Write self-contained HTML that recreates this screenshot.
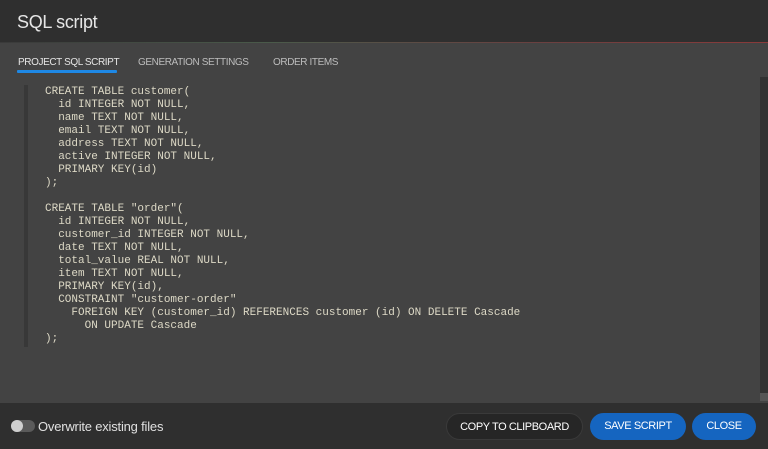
<!DOCTYPE html>
<html><head><style>
*{margin:0;padding:0;box-sizing:border-box}
body{width:768px;height:449px;background:#434343;font-family:"Liberation Sans",sans-serif;position:relative;overflow:hidden}
.hdr{position:absolute;left:0;top:0;width:768px;height:43px;background:#2f2f2f;border-bottom:1px solid #333}
.hdr h1{position:absolute;left:17px;top:12px;font-size:18px;letter-spacing:-0.3px;font-weight:normal;color:#e6e6e6}
.grad{position:absolute;left:0;top:42px;width:768px;height:1px;background:linear-gradient(90deg,#3a3a3a 0%,#4a5a4a 35%,#6a4040 70%,#8a3a3a 100%)}
.tab{position:absolute;top:57px;font-size:10px;letter-spacing:-0.4px;color:#bdbdbd}
.ul{position:absolute;left:17px;top:70px;width:100px;height:3px;background:#1e88e5;border-radius:1px}
.code{position:absolute;left:24px;top:85px;width:736px;height:262px;border-left:4px solid #383838}
pre{position:absolute;left:45px;top:86px;font-family:"Liberation Mono",monospace;font-size:11px;line-height:13px;color:#ddd9c6;margin:0}
.sb{position:absolute;left:760px;top:77px;width:8px;height:316px;background:#323232}
.sbt{position:absolute;left:760px;top:393px;width:8px;height:8px;background:#555}
.ftr{position:absolute;left:0;top:403px;width:768px;height:46px;background:#2f2f2f}
.tg{position:absolute;left:11px;top:420px;width:24px;height:12px;border-radius:6px;background:#5a5a5a}
.tg::after{content:"";position:absolute;left:0;top:0;width:12px;height:12px;border-radius:6px;background:#cfcfcf}
.lbl{position:absolute;left:38px;top:419px;font-size:13px;letter-spacing:-0.2px;color:#e0e0e0}
.btn{position:absolute;top:413px;height:27px;border-radius:14px;font-size:11px;letter-spacing:-0.4px;color:#fff;text-align:center;line-height:27px}
</style></head><body>
<div class="hdr"><h1>SQL script</h1></div>
<div class="grad"></div>
<div class="tab" style="left:18px;color:#e6e6e6">PROJECT SQL SCRIPT</div>
<div class="tab" style="left:138px">GENERATION SETTINGS</div>
<div class="tab" style="left:273px">ORDER ITEMS</div>
<div class="ul"></div>
<div class="code"></div>
<pre>CREATE TABLE customer(
  id INTEGER NOT NULL,
  name TEXT NOT NULL,
  email TEXT NOT NULL,
  address TEXT NOT NULL,
  active INTEGER NOT NULL,
  PRIMARY KEY(id)
);

CREATE TABLE "order"(
  id INTEGER NOT NULL,
  customer_id INTEGER NOT NULL,
  date TEXT NOT NULL,
  total_value REAL NOT NULL,
  item TEXT NOT NULL,
  PRIMARY KEY(id),
  CONSTRAINT "customer-order"
    FOREIGN KEY (customer_id) REFERENCES customer (id) ON DELETE Cascade
      ON UPDATE Cascade
);</pre>
<div class="sb"></div><div class="sbt"></div>
<div class="ftr"></div>
<div class="tg"></div>
<div class="lbl">Overwrite existing files</div>
<div class="btn" style="left:446px;width:137px;background:#262626;border:1px solid #3a3a3a">COPY TO CLIPBOARD</div>
<div class="btn" style="left:590px;width:96px;background:#1565c0">SAVE SCRIPT</div>
<div class="btn" style="left:692px;width:64px;background:#1565c0">CLOSE</div>
</body></html>
